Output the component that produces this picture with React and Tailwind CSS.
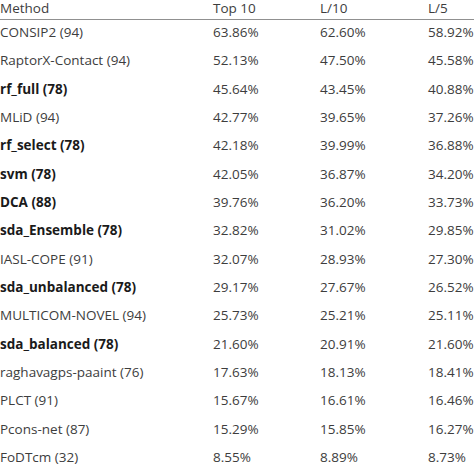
const rows = [
  ['CONSIP2 (94)', '63.86%', '62.60%', '58.92%', false],
  ['RaptorX-Contact (94)', '52.13%', '47.50%', '45.58%', false],
  ['rf_full (78)', '45.64%', '43.45%', '40.88%', true],
  ['MLiD (94)', '42.77%', '39.65%', '37.26%', false],
  ['rf_select (78)', '42.18%', '39.99%', '36.88%', true],
  ['svm (78)', '42.05%', '36.87%', '34.20%', true],
  ['DCA (88)', '39.76%', '36.20%', '33.73%', true],
  ['sda_Ensemble (78)', '32.82%', '31.02%', '29.85%', true],
  ['IASL-COPE (91)', '32.07%', '28.93%', '27.30%', false],
  ['sda_unbalanced (78)', '29.17%', '27.67%', '26.52%', true],
  ['MULTICOM-NOVEL (94)', '25.73%', '25.21%', '25.11%', false],
  ['sda_balanced (78)', '21.60%', '20.91%', '21.60%', true],
  ['raghavagps-paaint (76)', '17.63%', '18.13%', '18.41%', false],
  ['PLCT (91)', '15.67%', '16.61%', '16.46%', false],
  ['Pcons-net (87)', '15.29%', '15.85%', '16.27%', false],
  ['FoDTcm (32)', '8.55%', '8.89%', '8.73%', false],
]

export default function App() {
  return (
    <div
      className="w-[474px] h-[466px] overflow-hidden bg-white text-[13.5px] text-[#3d3d3d]"
      style={{ fontFamily: '"Open Sans", "Liberation Sans", sans-serif' }}
    >
      <div className="grid grid-cols-[213px_107px_108px_1fr] h-[20px] pt-[1px] border-b border-[#909090] leading-[14px]">
        <div>Method</div>
        <div>Top 10</div>
        <div>L/10</div>
        <div>L/5</div>
      </div>
      {rows.map(([name, a, b, c, bold]) => (
        <div key={name} className="grid grid-cols-[213px_107px_108px_1fr] h-[28.33px] pt-[2px] leading-[20px]">
          <div className={bold ? 'font-bold text-[#1a1a1a]' : ''}>{name}</div>
          <div>{a}</div>
          <div>{b}</div>
          <div>{c}</div>
        </div>
      ))}
    </div>
  )
}
